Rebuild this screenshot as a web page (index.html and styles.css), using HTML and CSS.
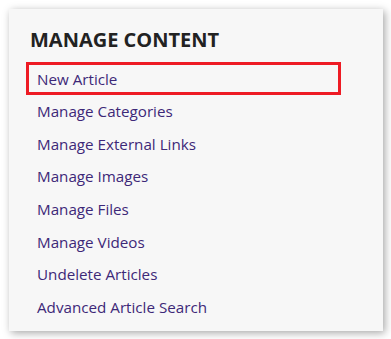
FILE: index.html
```html
<!DOCTYPE html>
<html lang="en">
<head>
  <meta charset="UTF-8">
  <title>Manage Content</title>
  <link rel="stylesheet" href="styles.css">
</head>
<body>
  <div class="card">
    <h2 class="card-title">MANAGE CONTENT</h2>
    <ul class="links">
      <li class="active"><a href="#">New Article</a></li>
      <li><a href="#">Manage Categories</a></li>
      <li><a href="#">Manage External Links</a></li>
      <li><a href="#">Manage Images</a></li>
      <li><a href="#">Manage Files</a></li>
      <li><a href="#">Manage Videos</a></li>
      <li><a href="#">Undelete Articles</a></li>
      <li><a href="#">Advanced Article Search</a></li>
    </ul>
  </div>
</body>
</html>
```

FILE: styles.css
```css
body {
  margin: 0; padding: 9px;
  background: #fff;
  font-family: "Open Sans", sans-serif;
}
.card {
  width: 374px; height: 322px;
  box-sizing: border-box;
  background: #f7f7f7;
  padding: 19px 42px 5px 17px;
  box-shadow: 2px 2px 8px rgba(0,0,0,0.35);
}
.card-title {
  margin: 0 0 10px 4px;
  font-size: 20px; line-height: 24px;
  font-weight: 700;
  color: #222;
}
.links { list-style: none; margin: 0; padding: 0; }
.links li {
  height: 32.7px; box-sizing: border-box;
  padding: 0 8px;
  display: flex; align-items: center;
  border: 3px solid transparent;
}
.links li.active { height: 33px; margin-bottom: -0.3px; border-color: #ee1b24; }
.links a {
  color: #3d2878; text-decoration: none;
  font-size: 15.2px;
}
```
